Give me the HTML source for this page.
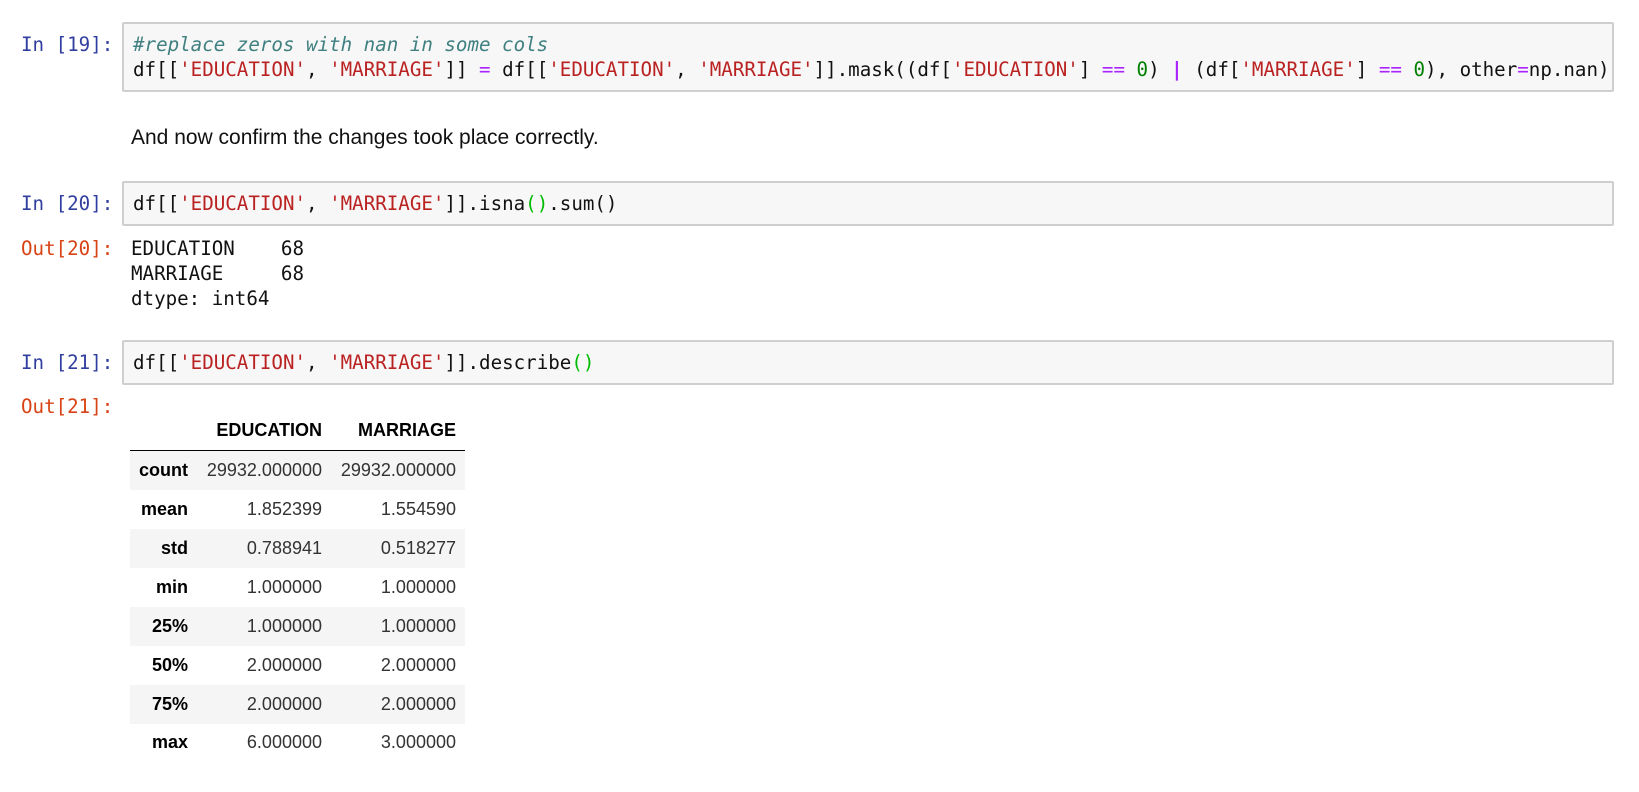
<!DOCTYPE html>
<html><head><meta charset="utf-8"><style>
html,body{margin:0;padding:0;background:#fff;width:1639px;height:792px;overflow:hidden}
.m,.s{position:absolute;white-space:pre}
.m{font:19.17px/24px "DejaVu Sans Mono","Liberation Mono",monospace;color:#111}
.s{font-family:"Liberation Sans",Arial,sans-serif}
.box{position:absolute;left:122px;width:1488px;background:#f7f7f7;border:2px solid #cfcfcf;border-radius:2px}
.in{color:#303F9F}.o{color:#D84315}
i{color:#408080;font-style:italic}
b{color:#BA2121;font-weight:normal}
u{color:#AA22FF;text-decoration:none}
u.p{font-weight:bold}
em{color:#008000;font-style:normal}
q{color:#00BB00;quotes:none}
q:before,q:after{content:none}
.st{position:absolute;left:130px;width:335px;height:39px;background:#f5f5f5}
.r{position:absolute;font:18px/22px "Liberation Sans",Arial,sans-serif;color:#333;text-align:right;white-space:pre}
.h{font-weight:bold;color:#000}
</style></head><body>
<div class="box" style="top:22px;height:66px"></div>
<div class="box" style="top:181px;height:41px"></div>
<div class="box" style="top:340px;height:41px"></div>

<div class="m in" style="left:21px;top:33px">In [19]:</div>
<div class="m" style="left:133px;top:33px"><i>#replace zeros with nan in some cols</i></div>
<div class="m" style="left:133px;top:58px">df[[<b>'EDUCATION'</b>, <b>'MARRIAGE'</b>]] <u>=</u> df[[<b>'EDUCATION'</b>, <b>'MARRIAGE'</b>]].mask((df[<b>'EDUCATION'</b>] <u>==</u> <em>0</em>) <u class="p">|</u> (df[<b>'MARRIAGE'</b>] <u>==</u> <em>0</em>), other<u>=</u>np.nan)</div>

<div class="s" style="left:131px;top:126px;font-size:21px;line-height:24px;color:#111">And now confirm the changes took place correctly.</div>

<div class="m in" style="left:21px;top:192px">In [20]:</div>
<div class="m" style="left:133px;top:192px">df[[<b>'EDUCATION'</b>, <b>'MARRIAGE'</b>]].isna<q>()</q>.sum()</div>

<div class="m o" style="left:21px;top:237px">Out[20]:</div>
<div class="m" style="left:131px;top:237px">EDUCATION    68</div>
<div class="m" style="left:131px;top:262px">MARRIAGE     68</div>
<div class="m" style="left:131px;top:287px">dtype: int64</div>

<div class="m in" style="left:21px;top:351px">In [21]:</div>
<div class="m" style="left:133px;top:351px">df[[<b>'EDUCATION'</b>, <b>'MARRIAGE'</b>]].describe<q>()</q></div>

<div class="m o" style="left:21px;top:395px">Out[21]:</div>

<div style="position:absolute;left:130px;top:450px;width:335px;height:1px;background:#000"></div>
<div class="st" style="top:451px"></div>
<div class="st" style="top:529px"></div>
<div class="st" style="top:607px"></div>
<div class="st" style="top:685px"></div>

<div class="r h" style="right:1317px;top:419px">EDUCATION</div>
<div class="r h" style="right:1183px;top:419px">MARRIAGE</div>

<div class="r h" style="right:1451px;top:459px">count</div>
<div class="r" style="right:1317px;top:459px">29932.000000</div>
<div class="r" style="right:1183px;top:459px">29932.000000</div>

<div class="r h" style="right:1451px;top:498px">mean</div>
<div class="r" style="right:1317px;top:498px">1.852399</div>
<div class="r" style="right:1183px;top:498px">1.554590</div>

<div class="r h" style="right:1451px;top:537px">std</div>
<div class="r" style="right:1317px;top:537px">0.788941</div>
<div class="r" style="right:1183px;top:537px">0.518277</div>

<div class="r h" style="right:1451px;top:576px">min</div>
<div class="r" style="right:1317px;top:576px">1.000000</div>
<div class="r" style="right:1183px;top:576px">1.000000</div>

<div class="r h" style="right:1451px;top:615px">25%</div>
<div class="r" style="right:1317px;top:615px">1.000000</div>
<div class="r" style="right:1183px;top:615px">1.000000</div>

<div class="r h" style="right:1451px;top:654px">50%</div>
<div class="r" style="right:1317px;top:654px">2.000000</div>
<div class="r" style="right:1183px;top:654px">2.000000</div>

<div class="r h" style="right:1451px;top:693px">75%</div>
<div class="r" style="right:1317px;top:693px">2.000000</div>
<div class="r" style="right:1183px;top:693px">2.000000</div>

<div class="r h" style="right:1451px;top:731px">max</div>
<div class="r" style="right:1317px;top:731px">6.000000</div>
<div class="r" style="right:1183px;top:731px">3.000000</div>
</body></html>
